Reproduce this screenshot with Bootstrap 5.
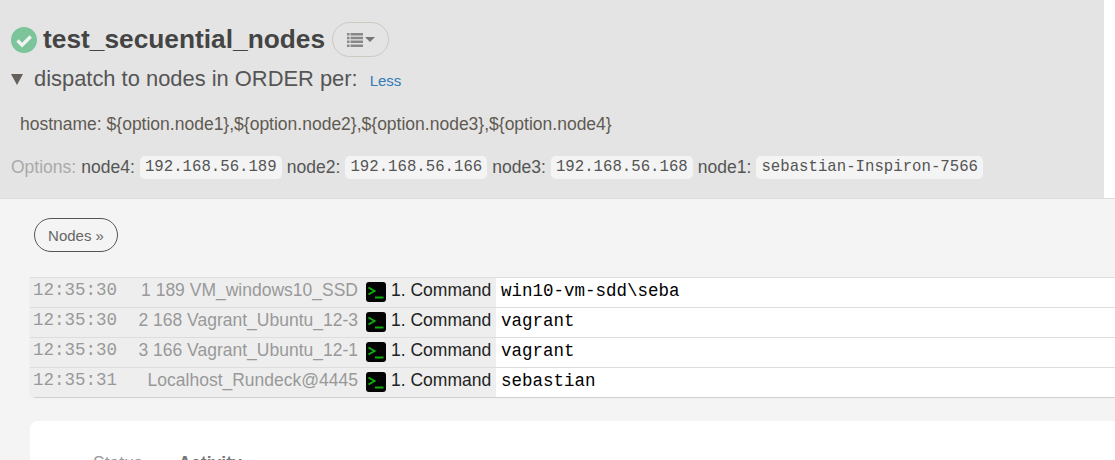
<!DOCTYPE html>
<html lang="en"><head><meta charset="utf-8"><title>test_secuential_nodes</title>
<link href="https://cdn.jsdelivr.net/npm/bootstrap@5.3.0/dist/css/bootstrap.min.css" rel="stylesheet">
<style>
html,body{height:460px;overflow:hidden}
body{background:#f4f4f4;font-family:"Liberation Sans",Arial,sans-serif;color:#555;font-size:17.5px;line-height:1.4}
.jobhead{width:1104px;height:198px;background:#e4e4e4;padding:22px 11px 0 11px;box-sizing:border-box}
.headwrap{border-bottom:1px solid #ddd;height:199px;background:#fff}
.titlerow{height:35px}
.okicon{width:26px;height:26px;flex:none}
.jobtitle{font-size:26.3px;font-weight:700;color:#444;margin:0 7px 0 6px;line-height:35px}
.menubtn{width:57px;height:35px;border:1px solid #ccc9c0;border-radius:18px;background:transparent;padding:0;display:flex;align-items:center;justify-content:center;gap:2px}
.caretd{width:0;height:0;border-left:5px solid transparent;border-right:5px solid transparent;border-top:5px solid #777}
.descrow{height:30px;margin-top:7px;font-size:21.9px;color:#555}
.tri{width:0;height:0;border-left:6px solid transparent;border-right:6px solid transparent;border-top:11px solid #666058;margin-right:11px}
.lessl{font-size:15px;color:#337ab7;text-decoration:none;margin-left:12px;position:relative;top:1px}
.hostln{color:#5f5a52;margin:18px 0 0 9px;line-height:24px}
.optln{margin-top:19px;line-height:24px;color:#555;white-space:nowrap;display:flex;align-items:center;gap:5.1px}
.optlabel{color:#aaa}
.optv{font-family:"Liberation Mono",monospace;font-size:15.7px;background:#f4f4f4;color:#555;border-radius:5px;padding:0 5px;height:23px;line-height:23px}
.nodesbtn{display:inline-block;margin:19px 0 0 34px;width:84px;height:34px;border:1px solid #555;border-radius:17px;background:transparent;font-size:15px;color:#666;padding:0;line-height:31px;text-align:center}
.logwrap{margin:25px 0 0 30px;border-top:1px solid #ddd;border-bottom-left-radius:6px;box-shadow:0 1px 1px #ccc}
.logrow{height:30px;border-bottom:1px solid #ddd;background:#fff}
.logrow:last-child{border-bottom:0;height:29px}
.logleft{width:466px;flex:none;background:#eee;height:100%;padding:0 0 5px 3px;white-space:nowrap}
.ts{font-family:"Liberation Mono",monospace;font-size:17.5px;color:#999;width:91px;flex:none}
.nodename{width:234px;flex:none;text-align:right;color:#999}
.term{width:20px;height:20px;flex:none;margin:3px 5px 0 8px;display:block}
.step{color:#222}
.cmdout{font-family:"Liberation Mono",monospace;font-size:17.5px;color:#000;padding-left:5px;line-height:26px}
.lowercard{margin:24px 0 0 30px;height:200px;background:#fff;border-radius:8px 0 0 0;padding:30px 0 0 63px;color:#999}
.lowercard b{color:#777;margin-left:31px}
</style></head><body>
<div class="headwrap"><div class="jobhead">
 <div class="d-flex align-items-center titlerow">
  <svg class="okicon" viewBox="0 0 26 26"><circle cx="13" cy="13" r="13" fill="#7cc49a"/><path d="M6.5 13.5l4.6 4.6 8.6-8.6" fill="none" stroke="#f4f4f4" stroke-width="3.4"/></svg>
  <h1 class="jobtitle">test_secuential_nodes</h1>
  <button class="menubtn" type="button" aria-label="Job actions"><svg width="16" height="14" viewBox="0 0 16 14" fill="#888"><path d="M0 0h2.5v2.5H0zM3.5 0H16v2.5H3.5zM0 3.8h2.5v2.5H0zM3.5 3.8H16v2.5H3.5zM0 7.6h2.5v2.5H0zM3.5 7.6H16v2.5H3.5zM0 11.4h2.5v2.5H0zM3.5 11.4H16v2.5H3.5z"/></svg><span class="caretd"></span></button>
 </div>
 <div class="d-flex align-items-center descrow"><span class="tri"></span><span>dispatch to nodes in ORDER per:</span><a class="lessl" href="#">Less</a></div>
 <div class="hostln">hostname: ${option.node1},${option.node2},${option.node3},${option.node4}</div>
 <div class="optln"><span class="optlabel">Options:</span><span>node4:</span><span class="optv">192.168.56.189</span><span>node2:</span><span class="optv">192.168.56.166</span><span>node3:</span><span class="optv">192.168.56.168</span><span>node1:</span><span class="optv">sebastian-Inspiron-7566</span></div>
</div></div>
<button class="nodesbtn" type="button">Nodes »</button>
<svg width="0" height="0" class="position-absolute"><symbol id="termi" viewBox="0 0 20 20"><rect width="20" height="20" rx="3" fill="#030303"/><path d="M2.5 5.5l6 3.5-6 3.5" fill="none" stroke="#0fae0f" stroke-width="2"/><rect x="9" y="14.5" width="8.5" height="2" fill="#0fae0f"/></symbol></svg>
<div class="logwrap">
 <div class="logrow d-flex"><div class="logleft d-flex align-items-center"><span class="ts">12:35:30</span><span class="nodename">1 189 VM_windows10_SSD</span><svg class="term"><use href="#termi"/></svg><span class="step">1. Command</span></div><div class="cmdout">win10-vm-sdd\seba</div></div>
 <div class="logrow d-flex"><div class="logleft d-flex align-items-center"><span class="ts">12:35:30</span><span class="nodename">2 168 Vagrant_Ubuntu_12-3</span><svg class="term"><use href="#termi"/></svg><span class="step">1. Command</span></div><div class="cmdout">vagrant</div></div>
 <div class="logrow d-flex"><div class="logleft d-flex align-items-center"><span class="ts">12:35:30</span><span class="nodename">3 166 Vagrant_Ubuntu_12-1</span><svg class="term"><use href="#termi"/></svg><span class="step">1. Command</span></div><div class="cmdout">vagrant</div></div>
 <div class="logrow d-flex"><div class="logleft d-flex align-items-center"><span class="ts">12:35:31</span><span class="nodename">Localhost_Rundeck@4445</span><svg class="term"><use href="#termi"/></svg><span class="step">1. Command</span></div><div class="cmdout">sebastian</div></div>
</div>
<div class="lowercard">Status <b>Activity</b></div>
<script src="https://cdn.jsdelivr.net/npm/bootstrap@5.3.0/dist/js/bootstrap.bundle.min.js"></script>
</body></html>
